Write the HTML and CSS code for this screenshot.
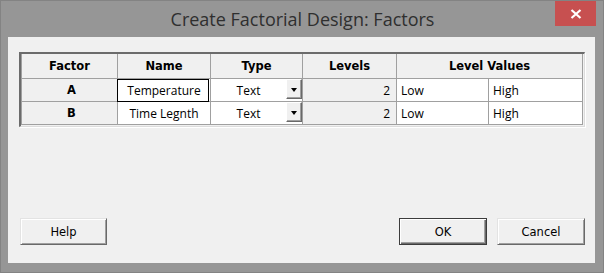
FILE: index.html
```html
<!DOCTYPE html>
<html>
<head>
<meta charset="utf-8">
<link rel="stylesheet" href="styles.css">
</head>
<body>
<div class="window">
  <div class="titlebar">
    <span class="title">Create Factorial Design: Factors</span>
    <div class="close">
      <svg width="12" height="10" viewBox="0 0 12 10"><path d="M1.5 1 L10.5 9 M10.5 1 L1.5 9" stroke="#fff" stroke-width="2.2" fill="none"/></svg>
    </div>
  </div>
  <div class="client">
    <div class="gridframe">
      <div class="grid">
        <div class="cell head">Factor</div>
        <div class="cell head">Name</div>
        <div class="cell head">Type</div>
        <div class="cell head">Levels</div>
        <div class="cell head span2">Level Values</div>

        <div class="cell fixed bold">A</div>
        <div class="cell edit center focus">Temperature</div>
        <div class="cell edit type"><span class="typetext">Text</span><span class="drop"><span class="tri"></span></span></div>
        <div class="cell fixed num">2</div>
        <div class="cell edit left">Low</div>
        <div class="cell edit left">High</div>

        <div class="cell fixed bold">B</div>
        <div class="cell edit center">Time Legnth</div>
        <div class="cell edit type"><span class="typetext">Text</span><span class="drop"><span class="tri"></span></span></div>
        <div class="cell fixed num">2</div>
        <div class="cell edit left">Low</div>
        <div class="cell edit left">High</div>
      </div>
    </div>
    <div class="buttons">
      <button class="btn">Help</button>
      <div class="spacer"></div>
      <button class="btn default">OK</button>
      <button class="btn">Cancel</button>
    </div>
  </div>
</div>
</body>
</html>
```
FILE: styles.css
```css
html, body {
  margin: 0;
  padding: 0;
}
body {
  width: 604px;
  height: 273px;
  overflow: hidden;
}
.window {
  box-sizing: border-box;
  width: 604px;
  height: 273px;
  background: #969696;
  border: 1px solid #838383;
  padding: 0 8px 9px 7px;
  display: flex;
  flex-direction: column;
  position: relative;
}
.titlebar {
  height: 36px;
  display: flex;
  justify-content: center;
  align-items: flex-start;
}
.title {
  font-family: "Open Sans", "Noto Sans", sans-serif;
  font-size: 18px;
  line-height: 36px;
  color: #2f2f2f;
  margin-left: 2px;
}
.close {
  position: absolute;
  top: 0;
  right: 7px;
  width: 41px;
  height: 25px;
  background: #c75050;
  display: flex;
  align-items: center;
  justify-content: center;
}
.client {
  flex: 1;
  background: #f0f0f0;
  display: flex;
  flex-direction: column;
  padding: 15px 10px 18px 11px;
}
.gridframe {
  align-self: flex-start;
  border-top: 2px solid #6b6b6b;
  border-left: 2px solid #6b6b6b;
  border-right: 1px solid #dcdcdc;
  border-bottom: 1px solid #dcdcdc;
  padding: 0 1px 1px 0;
  box-shadow: 1px 1px 0 #ffffff;
}
.grid {
  display: grid;
  grid-template-columns: 96px 93px 92px 94px 92px 94px;
  grid-template-rows: 25px 23px 23px;
  border-left: 1px solid #a0a0a0;
}
.cell {
  box-sizing: border-box;
  border-right: 1px solid #a0a0a0;
  border-bottom: 1px solid #a0a0a0;
  display: flex;
  align-items: center;
  font-family: "Open Sans", "Noto Sans", sans-serif;
  font-size: 12px;
  color: #000;
  white-space: nowrap;
}
.head {
  background: #f0f0f0;
  justify-content: center;
  font-family: "DejaVu Sans", sans-serif;
  font-weight: bold;
  font-size: 11.5px;
}
.span2 {
  grid-column: span 2;
}
.fixed {
  background: #f0f0f0;
}
.bold {
  justify-content: center;
  font-family: "DejaVu Sans", sans-serif;
  font-weight: bold;
  font-size: 11.5px;
  padding-left: 4px;
}
.num {
  justify-content: flex-end;
  padding-right: 6px;
}
.edit {
  background: #ffffff;
}
.center {
  justify-content: center;
}
.left {
  justify-content: flex-start;
  padding-left: 4px;
}
.focus {
  position: relative;
}
.focus::after {
  content: "";
  position: absolute;
  top: 0;
  bottom: -1px;
  left: -1px;
  right: 1px;
  border: 1px solid #000;
}
.type {
  align-items: stretch;
}
.typetext {
  flex: 1;
  display: flex;
  align-items: center;
  justify-content: center;
}
.drop {
  box-sizing: border-box;
  width: 16px;
  height: 20px;
  margin-top: 0;
  background: #f0f0f0;
  border-top: 1px solid #ffffff;
  border-left: 1px solid #ffffff;
  border-right: 1px solid #696969;
  border-bottom: 1px solid #696969;
  box-shadow: inset -1px -1px 0 #a0a0a0;
  display: flex;
  align-items: center;
  justify-content: center;
}
.tri {
  width: 0;
  height: 0;
  border-left: 3.5px solid transparent;
  border-right: 3.5px solid transparent;
  border-top: 4px solid #000;
  margin-top: 1px;
}
.buttons {
  margin-top: auto;
  display: flex;
  gap: 10px;
  padding-left: 1px;
}
.spacer {
  flex: 1;
}
.btn {
  box-sizing: border-box;
  width: 88px;
  height: 27px;
  margin: 0;
  padding: 0;
  background: #f0f0f0;
  border-top: 1px solid #e3e3e3;
  border-left: 1px solid #e3e3e3;
  border-right: 1px solid #696969;
  border-bottom: 1px solid #696969;
  box-shadow: inset 1px 1px 0 #ffffff, inset -1px -1px 0 #a0a0a0;
  font-family: "DejaVu Sans", sans-serif;
  font-size: 11.5px;
  color: #000;
}
.btn:first-child {
  width: 87px;
}
.default {
  border: 1px solid #3c3c3c;
  box-shadow: inset 1px 1px 0 #ffffff, inset -1px -1px 0 #696969, inset -2px -2px 0 #a0a0a0;
}
```
